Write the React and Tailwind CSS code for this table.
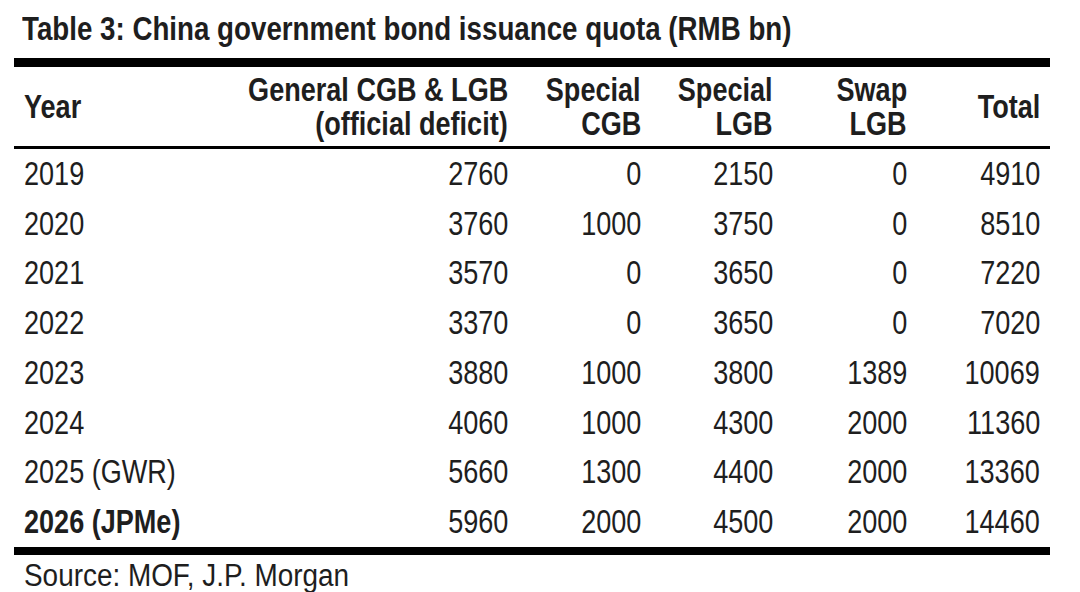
import React from 'react';

const rows = [
  { year: '2019', v: ['2760', '0', '2150', '0', '4910'] },
  { year: '2020', v: ['3760', '1000', '3750', '0', '8510'] },
  { year: '2021', v: ['3570', '0', '3650', '0', '7220'] },
  { year: '2022', v: ['3370', '0', '3650', '0', '7020'] },
  { year: '2023', v: ['3880', '1000', '3800', '1389', '10069'] },
  { year: '2024', v: ['4060', '1000', '4300', '2000', '11360'] },
  { year: '2025 (GWR)', v: ['5660', '1300', '4400', '2000', '13360'] },
  { year: '2026 (JPMe)', v: ['5960', '2000', '4500', '2000', '14460'], bold: true },
];

const cols = 'grid grid-cols-[236px_268px_133px_132px_134px_133px]';
const font = { fontFamily: '"Liberation Sans", Arial, sans-serif' };

// Arial Narrow isn't installed, so squeeze Liberation Sans sideways
const L = ({ children, className = 'scale-x-[0.82]' }) => (
  <span className={`inline-block whitespace-nowrap origin-left ${className}`}>{children}</span>
);
const R = ({ children }) => (
  <span className="inline-block whitespace-nowrap origin-right scale-x-[0.82]">{children}</span>
);

export default function App() {
  return (
    <div className="w-[1080px] h-[592px] bg-white text-[#1e1e1e] overflow-hidden" style={font}>
      <h1 className="pl-[22px] pt-[11px] h-[58px] text-[33px] leading-[36px] font-bold">
        <L className="scale-x-[0.84]">Table 3: China government bond issuance quota (RMB bn)</L>
      </h1>
      <div className="ml-[14px] w-[1036px]">
        <div className="h-[9px] bg-black" />
        <div className={`${cols} h-[79px] items-center text-[33px] leading-[34px] font-bold`}>
          <div className="pl-[10px]"><L>Year</L></div>
          <div className="pr-[10px] flex flex-col items-end">
            <R>General CGB &amp; LGB</R>
            <R>(official deficit)</R>
          </div>
          <div className="pr-[10px] flex flex-col items-end"><R>Special</R><R>CGB</R></div>
          <div className="pr-[10px] flex flex-col items-end"><R>Special</R><R>LGB</R></div>
          <div className="pr-[10px] flex flex-col items-end"><R>Swap</R><R>LGB</R></div>
          <div className="pr-[10px] flex flex-col items-end"><R>Total</R></div>
        </div>
        <div className="h-[3px] bg-black" />
        {rows.map((r) => (
          <div key={r.year} className={`${cols} h-[49.75px] items-center text-[33px] leading-[36px]`}>
            <div className="pl-[10px]">
              <L className={r.bold ? 'font-bold scale-x-[0.82]' : 'scale-x-[0.82]'}>{r.year}</L>
            </div>
            {r.v.map((x, i) => (
              <div key={i} className="pr-[10px] flex justify-end"><R>{x}</R></div>
            ))}
          </div>
        ))}
        <div className="h-[8px] bg-black" />
      </div>
      <div className="pl-[24px] pt-[3px] text-[31px] leading-[36px]">
        <L className="scale-x-[0.9]">Source: MOF, J.P. Morgan</L>
      </div>
    </div>
  );
}
